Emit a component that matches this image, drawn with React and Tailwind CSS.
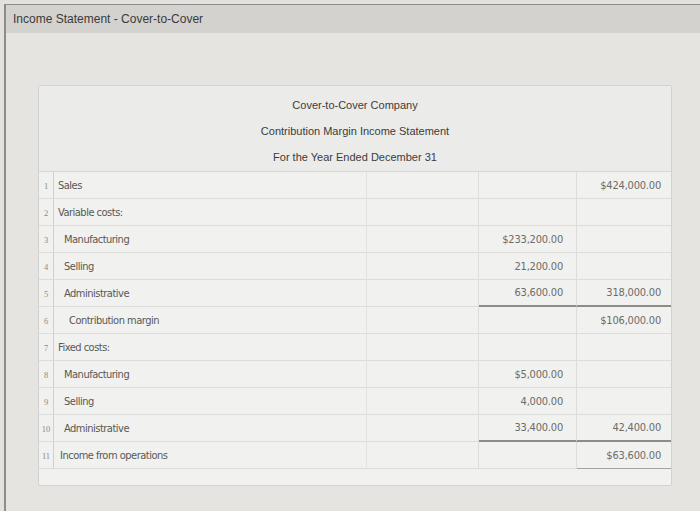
const rows = [
  { n: 1, label: "Sales", indent: "pl-1", c4: "$424,000.00" },
  { n: 2, label: "Variable costs:", indent: "pl-1" },
  { n: 3, label: "Manufacturing", indent: "pl-[10px]", c3: "$233,200.00" },
  { n: 4, label: "Selling", indent: "pl-[10px]", c3: "21,200.00" },
  { n: 5, label: "Administrative", indent: "pl-[10px]", c3: "63,600.00", c4: "318,000.00", rule: true },
  { n: 6, label: "Contribution margin", indent: "pl-[15px]", c4: "$106,000.00" },
  { n: 7, label: "Fixed costs:", indent: "pl-1" },
  { n: 8, label: "Manufacturing", indent: "pl-[10px]", c3: "$5,000.00" },
  { n: 9, label: "Selling", indent: "pl-[10px]", c3: "4,000.00" },
  { n: 10, label: "Administrative", indent: "pl-[10px]", c3: "33,400.00", c4: "42,400.00", rule: true },
  { n: 11, label: "Income from operations", indent: "pl-[6px]", c4: "$63,600.00", last: true },
]

const Row = ({ r }) => {
  const ruled = r.rule ? "border-b-2 border-b-[#8c8c8a]" : "border-b border-b-[#dcdcda]"
  return (
    <div className="grid grid-cols-[15px_313px_112px_98px_96px] h-[27px] text-[11px] tracking-[-0.2px] font-['DejaVu_Sans_Condensed','Lato',sans-serif]">
      <div className="flex items-center justify-center pt-[2px] border-b border-b-[#dcdcda] border-r border-r-[#cfcfcd] text-[8.5px] tracking-normal text-[#8a8a88] font-['Liberation_Serif',serif]">
        {r.n}
      </div>
      <div className={`flex items-center pt-[2px] border-b border-b-[#dcdcda] border-r border-r-[#e2e2e0] tracking-[-0.5px] text-[#585856] ${r.indent}`}>
        {r.label}
      </div>
      <div className="border-b border-b-[#dcdcda] border-r border-r-[#dddddb]" />
      <div className={`flex items-center justify-end pt-[2px] pr-[13px] border-r border-r-[#dddddb] text-[#6c6c6a] ${ruled}`}>
        {r.c3}
      </div>
      <div className={`flex items-center justify-end pt-[2px] pr-[12px] text-[#6c6c6a] ${r.last ? "border-b border-b-[#a4a4a2]" : ruled}`}>
        {r.c4}
      </div>
    </div>
  )
}

export default function App() {
  return (
    <div className="w-[700px] h-[511px] bg-[#e3e1de] pt-[4px] pl-[4px] overflow-hidden">
      <div className="h-[507px] border-t border-l-2 border-[#8e8c8a] bg-[#e6e4e1]">
        <div className="h-[28px] bg-[#d4d2cf] flex items-center pl-[7px] text-[12px] text-[#3a3a3a] font-['Liberation_Sans',Arial,sans-serif]">
          Income Statement - Cover-to-Cover
        </div>
        <div className="pt-[52px] pl-[32px]">
          <div className="w-[634px] border border-[#d2d2d0] rounded-[2px] bg-[#f1f1ef] overflow-hidden">
            <div className="h-[86px] bg-[#ebebe9] border-b border-b-[#d6d6d4] flex flex-col items-center pt-[13px] gap-[13px] text-[11px] leading-[13px] text-[#3c3c3c] font-['Liberation_Sans',Arial,sans-serif]">
              <p>Cover-to-Cover Company</p>
              <p>Contribution Margin Income Statement</p>
              <p>For the Year Ended December 31</p>
            </div>
            {rows.map((r) => (
              <Row key={r.n} r={r} />
            ))}
            <div className="h-[16px]" />
          </div>
        </div>
      </div>
    </div>
  )
}
